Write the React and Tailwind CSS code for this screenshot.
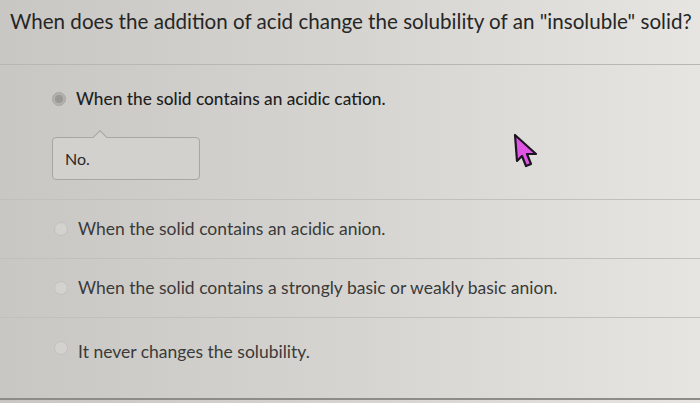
import React from 'react';

const options = [
  { text: 'When the solid contains an acidic cation.', selected: true },
  { text: 'When the solid contains an acidic anion.' },
  { text: 'When the solid contains a strongly basic or weakly basic anion.' },
  { text: 'It never changes the solubility.' },
];

function Radio({ selected }) {
  if (selected) {
    return (
      <span className="w-[14px] h-[14px] rounded-full border border-[#a9a7a4] bg-[#b3b1ae] flex items-center justify-center shrink-0">
        <span className="w-[8px] h-[8px] rounded-full bg-[#9a9895]" />
      </span>
    );
  }
  return <span className="w-[14px] h-[14px] rounded-full border border-[#c2c0bc] bg-[#d4d2ce] shrink-0" />;
}

function Cursor() {
  return (
    <svg className="absolute left-[511px] top-[132px]" width="30" height="38" viewBox="0 0 30 38">
      <path
        d="M4 3 L6 29 L11 24 L15 34 L20 32 L16 22 L25 22 Z"
        fill="#e155e5"
        stroke="#1c1420"
        strokeWidth="2.2"
        strokeLinejoin="round"
      />
    </svg>
  );
}

export default function App() {
  return (
    <div
      className="relative w-[700px] h-[403px] overflow-hidden bg-gradient-to-r from-[#c9c7c3] via-[#d6d4d0] to-[#e6e5e1]"
      style={{ fontFamily: 'Lato, "Open Sans", sans-serif' }}
    >
      {/* question */}
      <div className="h-[65px] px-[10px] pt-[7px] border-b border-[#b9b7b3]">
        <h1 className="text-[20.6px] leading-[28px] text-[#262626] whitespace-nowrap">
          When does the addition of acid change the solubility of an "insoluble" solid?
        </h1>
      </div>

      {/* selected option + feedback */}
      <div className="h-[135px] border-b border-[#c2c0bc] pl-[52px]">
        <div className="flex items-center gap-[10px] pt-[18px] h-[50px]">
          <Radio selected />
          <span className="text-[17.3px] text-[#1f1f1f] font-medium">{options[0].text}</span>
        </div>
        <div className="relative mt-[22px] w-[148px] h-[43px] rounded-[4px] border border-[#a8a6a2] bg-[#d3d1cd] flex items-center pl-[12px]">
          <span className="absolute -top-[6px] left-[42px] w-[10px] h-[10px] rotate-45 bg-[#d3d1cd] border-l border-t border-[#a8a6a2]" />
          <span className="text-[16px] text-[#2a2a2a]">No.</span>
        </div>
      </div>

      {options.slice(1).map((o, i) => (
        <div
          key={i}
          className={`flex gap-[10px] pl-[54px] ${i === 2 ? 'h-[82px] items-start pt-[23px] border-b-2 border-[#8e8c88]' : 'h-[59px] items-center border-b border-[#c2c0bc]'}`}
        >
          <Radio />
          <span className="text-[17.5px] leading-[22px] text-[#3a3a3a]">{o.text}</span>
        </div>
      ))}

      <Cursor />
    </div>
  );
}
